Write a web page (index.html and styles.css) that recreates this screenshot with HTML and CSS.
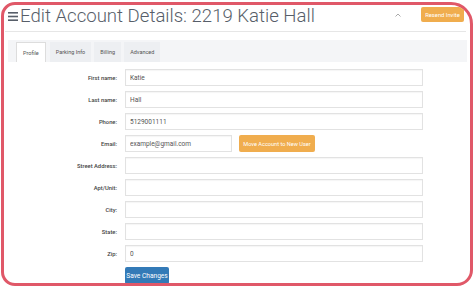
FILE: index.html
```html
<!DOCTYPE html>
<html lang="en">
<head>
    <meta charset="UTF-8">
    <meta name="viewport" content="width=device-width, initial-scale=1.0">
    <title>Edit Account Details</title>
    <link rel="stylesheet" href="styles.css">
</head>
<body>
  <div class="frame">
    <div class="page-header">
      <h1 class="title">
        <svg class="menu-icon" width="10" height="9" viewBox="0 0 10 9">
          <rect x="0" y="0" width="10" height="1.6"/>
          <rect x="0" y="3.7" width="10" height="1.6"/>
          <rect x="0" y="7.4" width="10" height="1.6"/>
        </svg>
        Edit Account Details: 2219 Katie Hall
      </h1>
      <svg class="caret" width="6" height="4" viewBox="0 0 6 4">
        <polyline points="0.5,3.5 3,1 5.5,3.5"/>
      </svg>
      <button class="btn btn-warning btn-resend">Resend Invite</button>
    </div>

    <div class="tabs">
      <a class="tab active">Profile</a>
      <a class="tab">Parking Info</a>
      <a class="tab">Billing</a>
      <a class="tab">Advanced</a>
    </div>

    <form class="account-form">
      <label>First name:</label>
      <input type="text" value="Katie">

      <label>Last name:</label>
      <input type="text" value="Hall">

      <label>Phone:</label>
      <input type="text" value="5129001111">

      <label>Email:</label>
      <div class="inline-group">
        <input type="text" class="short" value="example@gmail.com">
        <button type="button" class="btn btn-warning btn-move">Move Account to New User</button>
      </div>

      <label>Street Address:</label>
      <input type="text" value="">

      <label>Apt/Unit:</label>
      <input type="text" value="">

      <label>City:</label>
      <input type="text" value="">

      <label>State:</label>
      <input type="text" value="">

      <label>Zip:</label>
      <input type="text" value="0">

      <span></span>
      <div class="actions"><button type="button" class="btn btn-primary">Save Changes</button></div>
    </form>
  </div>
</body>
</html>
```

FILE: styles.css
```css
body {
    margin: 0;
    background-color: #fff;
    font-family: Roboto, "Liberation Sans", sans-serif;
    color: #555;
}
.frame {
    box-sizing: border-box;
    width: 472px;
    height: 284px;
    margin: 2px 0 0 1px;
    border: 3px solid #e05868;
    border-radius: 14px 22px 16px 14px;
    overflow: hidden;
}
.page-header {
    display: flex;
    align-items: flex-start;
    height: 25px;
    margin: 0 4px 0 1px;
    padding: 1px 2px 0 3px;
    border-bottom: 1px solid #e6e6e6;
}
.title {
    display: flex;
    align-items: center;
    margin: 0;
    font-weight: 300;
    font-size: 18.6px;
    line-height: 20px;
    color: #575e69;
    flex: 1;
    white-space: nowrap;
}
.menu-icon {
    fill: #575e69;
    margin-right: 2px;
}
.caret {
    fill: none;
    stroke: #aaa;
    stroke-width: 1;
    margin: 7px 20px 0 0;
}
.btn {
    border: none;
    border-radius: 2px;
    color: #fff;
    font-family: Roboto, sans-serif;
    white-space: nowrap;
    cursor: pointer;
    padding: 0;
}
.btn-warning {
    background-color: #f0ad4e;
}
.btn-primary {
    background-color: #337ab7;
    height: 17px;
    width: 44px;
    font-size: 6.6px;
}
.btn-resend {
    height: 15px;
    width: 43px;
    margin-top: 1px;
    font-size: 5.8px;
}
.tabs {
    display: flex;
    gap: 3px;
    margin: 8px 3px 0 4px;
    padding: 2px 0 0 8px;
    height: 20px;
    background-color: #f4f5f7;
}
.tab {
    display: flex;
    align-items: center;
    padding: 0 6px;
    font-size: 5.5px;
    color: #555;
    background-color: #edeff2;
    cursor: pointer;
}
.tab.active {
    background-color: #fff;
    border: 1px solid #ddd;
    border-bottom: none;
    margin-right: 1px;
}
.account-form {
    display: grid;
    grid-template-columns: 113px 298px;
    grid-auto-rows: 17px;
    column-gap: 8px;
    row-gap: 5px;
    margin-top: 7px;
}
.account-form label {
    display: flex;
    align-items: center;
    justify-content: flex-end;
    font-size: 5.8px;
    font-weight: 500;
    color: #444;
    white-space: nowrap;
}
.account-form input {
    box-sizing: border-box;
    height: 17px;
    width: 100%;
    margin: 0;
    padding: 0 4px;
    border: 1px solid #e2e2e2;
    box-shadow: inset 0 1px 1px rgba(0, 0, 0, 0.04);
    font-family: Roboto, sans-serif;
    font-size: 6.5px;
    color: #555;
}
.inline-group,
.actions {
    display: flex;
    gap: 7px;
}
.account-form input.short {
    width: 107px;
}
.btn-move {
    height: 17px;
    width: 76px;
    font-size: 5.6px;
}
```
